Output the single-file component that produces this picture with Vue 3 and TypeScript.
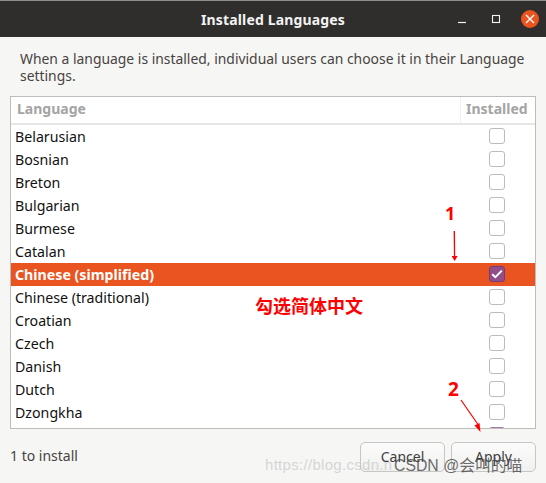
<script setup lang="ts">
interface Lang { id: string; name: string; on: boolean; selected?: boolean }
const langs: Lang[] = [
  { id: 'be', name: 'Belarusian', on: false },
  { id: 'bs', name: 'Bosnian', on: false },
  { id: 'br', name: 'Breton', on: false },
  { id: 'bg', name: 'Bulgarian', on: false },
  { id: 'my', name: 'Burmese', on: false },
  { id: 'ca', name: 'Catalan', on: false },
  { id: 'zh-s', name: 'Chinese (simplified)', on: true, selected: true },
  { id: 'zh-t', name: 'Chinese (traditional)', on: false },
  { id: 'hr', name: 'Croatian', on: false },
  { id: 'cs', name: 'Czech', on: false },
  { id: 'da', name: 'Danish', on: false },
  { id: 'nl', name: 'Dutch', on: false },
  { id: 'dz', name: 'Dzongkha', on: false },
  { id: 'next', name: '', on: true },
]
</script>

<template>
  <div class="window">
    <header class="titlebar">
      <span class="title">Installed Languages</span>
      <div class="controls">
        <svg class="ctl" width="14" height="14" viewBox="0 0 14 14"><path d="M3 10.5h8" stroke="#f2f2f2" stroke-width="1.2" /></svg>
        <svg class="ctl" width="14" height="14" viewBox="0 0 14 14"><rect x="3.5" y="3.5" width="7" height="7" fill="none" stroke="#f2f2f2" stroke-width="1.1" /></svg>
        <span class="close">
          <svg width="18" height="18" viewBox="0 0 18 18"><path d="M5 5l8 8M13 5l-8 8" stroke="#fff" stroke-width="1.4" /></svg>
        </span>
      </div>
    </header>

    <main class="content">
      <p class="intro">When a language is installed, individual users can choose it in their Language settings.</p>

      <section class="list">
        <div class="list-head">
          <span class="col-lang">Language</span>
          <span class="col-inst">Installed</span>
        </div>
        <div class="rows">
          <div v-for="l in langs" :key="l.id" class="row" :class="{ selected: l.selected }">
            <span class="row-name">{{ l.name }}</span>
            <span class="check" :class="{ on: l.on }">
              <svg v-if="l.on" width="12" height="10" viewBox="0 0 12 10"><path d="M1.2 5.2l3.2 3L10.8 1.6" fill="none" stroke="#fff" stroke-width="2" /></svg>
            </span>
          </div>
        </div>
      </section>

      <footer class="footer">
        <span class="status">1 to install</span>
        <div class="buttons">
          <button class="btn">Cancel</button>
          <button class="btn">Apply</button>
        </div>
      </footer>
    </main>

    <span class="note n1">1</span>
    <span class="note n2">2</span>
    <span class="note cn">勾选简体中文</span>
    <svg class="arrows" width="546" height="483" viewBox="0 0 546 483">
      <path d="M453.6 231L455 231L455.2 256L457.6 256L454.6 261L451.6 256L453.9 256Z" fill="#f00" />
      <path d="M461 400L479 426" stroke="#f00" stroke-width="1.2" />
      <path d="M480.5 432L474.5 425.5L479.5 423Z" fill="#f00" />
    </svg>
    <span class="wm wm-url">https://blog.csdn.n</span>
    <span class="wm wm-name">CSDN @会叫的喵</span>
  </div>
</template>

<style>
html, body { margin: 0; background: #f6f6f5; }
</style>

<style scoped>
.window {
  position: relative;
  width: 546px;
  height: 483px;
  overflow: hidden;
  background: #f6f6f5;
  font-family: "Noto Sans", "Open Sans", sans-serif;
  font-size: 14px;
  color: #3d3d3d;
}
.titlebar {
  height: 36px;
  border-top: 1px solid #8f8d8a;
  background: #302e2d;
  display: flex;
  align-items: center;
  justify-content: center;
  position: relative;
  box-sizing: content-box;
}
.title {
  color: #f3f3f3;
  font-weight: 700;
  font-size: 14px;
  letter-spacing: 0.15px;
}
.controls {
  position: absolute;
  right: 7px;
  top: 9px;
  display: flex;
  align-items: center;
  gap: 20px;
}
.ctl { display: block; }
.close {
  width: 18px;
  height: 18px;
  border-radius: 50%;
  background: #e95420;
  display: block;
  margin-left: -2px;
}
.close svg { display: block; }
.content {
  padding: 13px 10px 0;
  display: flex;
  flex-direction: column;
}
.intro {
  margin: 0 10px;
  height: 46px;
  line-height: 17px;
  font-size: 13.9px;
  color: #474340;
}
.list {
  width: 526px;
  height: 333px;
  box-sizing: border-box;
  border: 1px solid #bdbdbc;
  background: #fff;
  overflow: hidden;
}
.list-head {
  height: 28px;
  box-sizing: border-box;
  border-bottom: 2px solid #e6e6e5;
  display: flex;
  align-items: center;
  font-weight: 700;
  color: #a4a4a3;
  font-size: 14px;
}
.col-lang { flex: 1; padding-left: 6px; padding-bottom: 3px; }
.col-inst {
  width: 75px;
  height: 26px;
  line-height: 23px;
  box-sizing: border-box;
  border-left: 1px solid #f1f1f0;
  padding-left: 5px;
}
.row {
  height: 23px;
  display: flex;
  align-items: center;
  justify-content: space-between;
  padding: 0 30px 0 4px;
  color: #111;
  font-size: 14.2px;
}
.row.selected {
  background: #e95420;
  color: #fff;
  font-weight: 700;
}
.check {
  width: 16px;
  height: 16px;
  box-sizing: border-box;
  border: 1px solid #bcbcbc;
  border-radius: 3px;
  background: #fff;
  display: flex;
  align-items: center;
  justify-content: center;
  margin-bottom: 1px;
}
.check.on {
  background: #924d8b;
  border-color: #7a3b74;
}
.row:last-child .check.on {
  border-color: #a67aa1;
}
.footer {
  display: flex;
  align-items: flex-start;
  justify-content: space-between;
  padding-top: 13px;
  width: 526px;
}
.status {
  color: #474340;
  font-size: 14px;
  line-height: 28px;
}
.buttons { display: flex; gap: 6px; }
.btn {
  width: 85px;
  height: 30px;
  box-sizing: border-box;
  border: 1px solid #c6c6c5;
  border-radius: 5px;
  background: linear-gradient(#fbfbfb, #f1f1f0);
  font: inherit;
  color: #3d3d3d;
  padding: 0 0 2px;
}
.note {
  position: absolute;
  color: #f00;
  font-weight: 700;
  font-family: "Noto Sans", "Noto Sans CJK SC", sans-serif;
  line-height: 1;
}
.n1 { left: 445px; top: 204px; font-size: 18px; }
.n2 { left: 448px; top: 380px; font-size: 19px; }
.cn {
  left: 255px;
  top: 296px;
  font-size: 18px;
  font-family: "Noto Sans CJK SC", sans-serif;
}
.arrows { position: absolute; left: 0; top: 0; pointer-events: none; }
.wm {
  position: absolute;
  font-family: "Liberation Sans", "Noto Sans CJK SC", sans-serif;
  white-space: nowrap;
  line-height: 1;
}
.wm-url { left: 265px; top: 457px; font-size: 15px; color: rgba(190, 190, 190, 0.6); letter-spacing: 0.3px; }
.wm-name { left: 394px; top: 458px; font-size: 15.8px; color: rgba(70, 70, 70, 0.8); }
</style>
